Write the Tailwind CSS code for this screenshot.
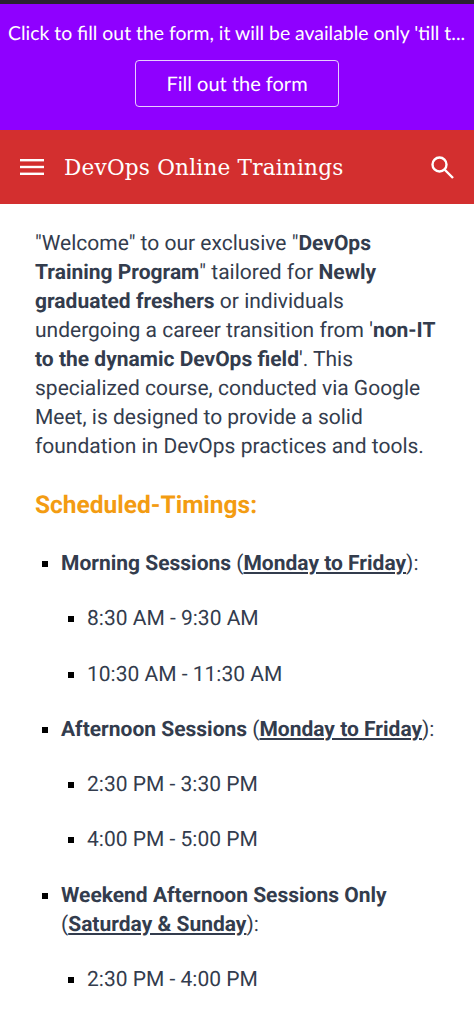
<!DOCTYPE html>
<html lang="en">
<head>
    <meta charset="UTF-8">
    <script src="https://cdn.jsdelivr.net/npm/@tailwindcss/browser@4"></script>
    <title>DevOps Online Trainings</title>
</head>
<body class="bg-white">
    <div class="h-[1015px] overflow-hidden font-['Roboto',sans-serif]">
        <div class="h-1 bg-[#2a2130]"></div>
        <section class="h-[126px] bg-[#8f00ff] text-white flex flex-col items-center">
            <p class="w-full px-2 pt-[16px] h-[56px] text-[19.4px] leading-[28px] whitespace-nowrap font-['Lato',sans-serif] [text-rendering:geometricPrecision]">Click to fill out the form, it will be available only 'till t...</p>
            <a class="w-[204px] h-[47px] border border-white/80 rounded flex items-center justify-center text-[20px] font-['Lato',sans-serif] [text-rendering:geometricPrecision]">Fill out the form</a>
        </section>
        <header class="h-[74px] bg-[#d32f2f] text-white flex items-center pl-5 pr-5">
            <svg class="w-6 h-6 shrink-0" viewBox="0 0 24 16" fill="#fff"><rect y="0" width="24" height="2.4"/><rect y="6.8" width="24" height="2.4"/><rect y="13.6" width="24" height="2.4"/></svg>
            <h1 class="ml-5 flex-1 pt-[2px] text-[21.6px] tracking-[0.2px] font-['DejaVu_Serif',serif]">DevOps Online Trainings</h1>
            <svg class="w-6 h-6" viewBox="0 0 24 24" fill="none" stroke="#fff" stroke-width="2.4"><circle cx="9.5" cy="9.5" r="7"/><path d="M14.5 14.5L23 23"/></svg>
        </header>
        <main class="px-[35px] pt-[26px] text-[21px] leading-[29px] text-[#333c4d] [text-rendering:geometricPrecision]">
            <p>"Welcome" to our exclusive "<b>DevOps Training Program</b>" tailored for <b>Newly graduated freshers</b> or individuals undergoing a career transition from '<b>non-IT to the dynamic DevOps field</b>'. This specialized course, conducted via Google Meet, is designed to provide a solid foundation in DevOps practices and tools.</p>
            <h2 class="mt-[25px] text-[24.5px] leading-[36px] font-bold text-[#f39c12]">Scheduled-Timings:</h2>
            <ul class="mt-[27px] ml-[26px] list-[square] marker:text-black space-y-[26.3px]">
                <li><b>Morning Sessions</b> (<b class="underline">Monday to Friday</b>):
                    <ul class="mt-[26.3px] ml-[26px] list-[square] space-y-[26.3px]">
                        <li>8:30 AM - 9:30 AM</li>
                        <li>10:30 AM - 11:30 AM</li>
                    </ul>
                </li>
                <li><b>Afternoon Sessions</b> (<b class="underline">Monday to Friday</b>):
                    <ul class="mt-[26.3px] ml-[26px] list-[square] space-y-[26.3px]">
                        <li>2:30 PM - 3:30 PM</li>
                        <li>4:00 PM - 5:00 PM</li>
                    </ul>
                </li>
                <li><b>Weekend Afternoon Sessions Only</b> (<b class="underline">Saturday &amp; Sunday</b>):
                    <ul class="mt-[26.3px] ml-[26px] list-[square] space-y-[26.3px]">
                        <li>2:30 PM - 4:00 PM</li>
                    </ul>
                </li>
            </ul>
        </main>
    </div>
</body>
</html>
